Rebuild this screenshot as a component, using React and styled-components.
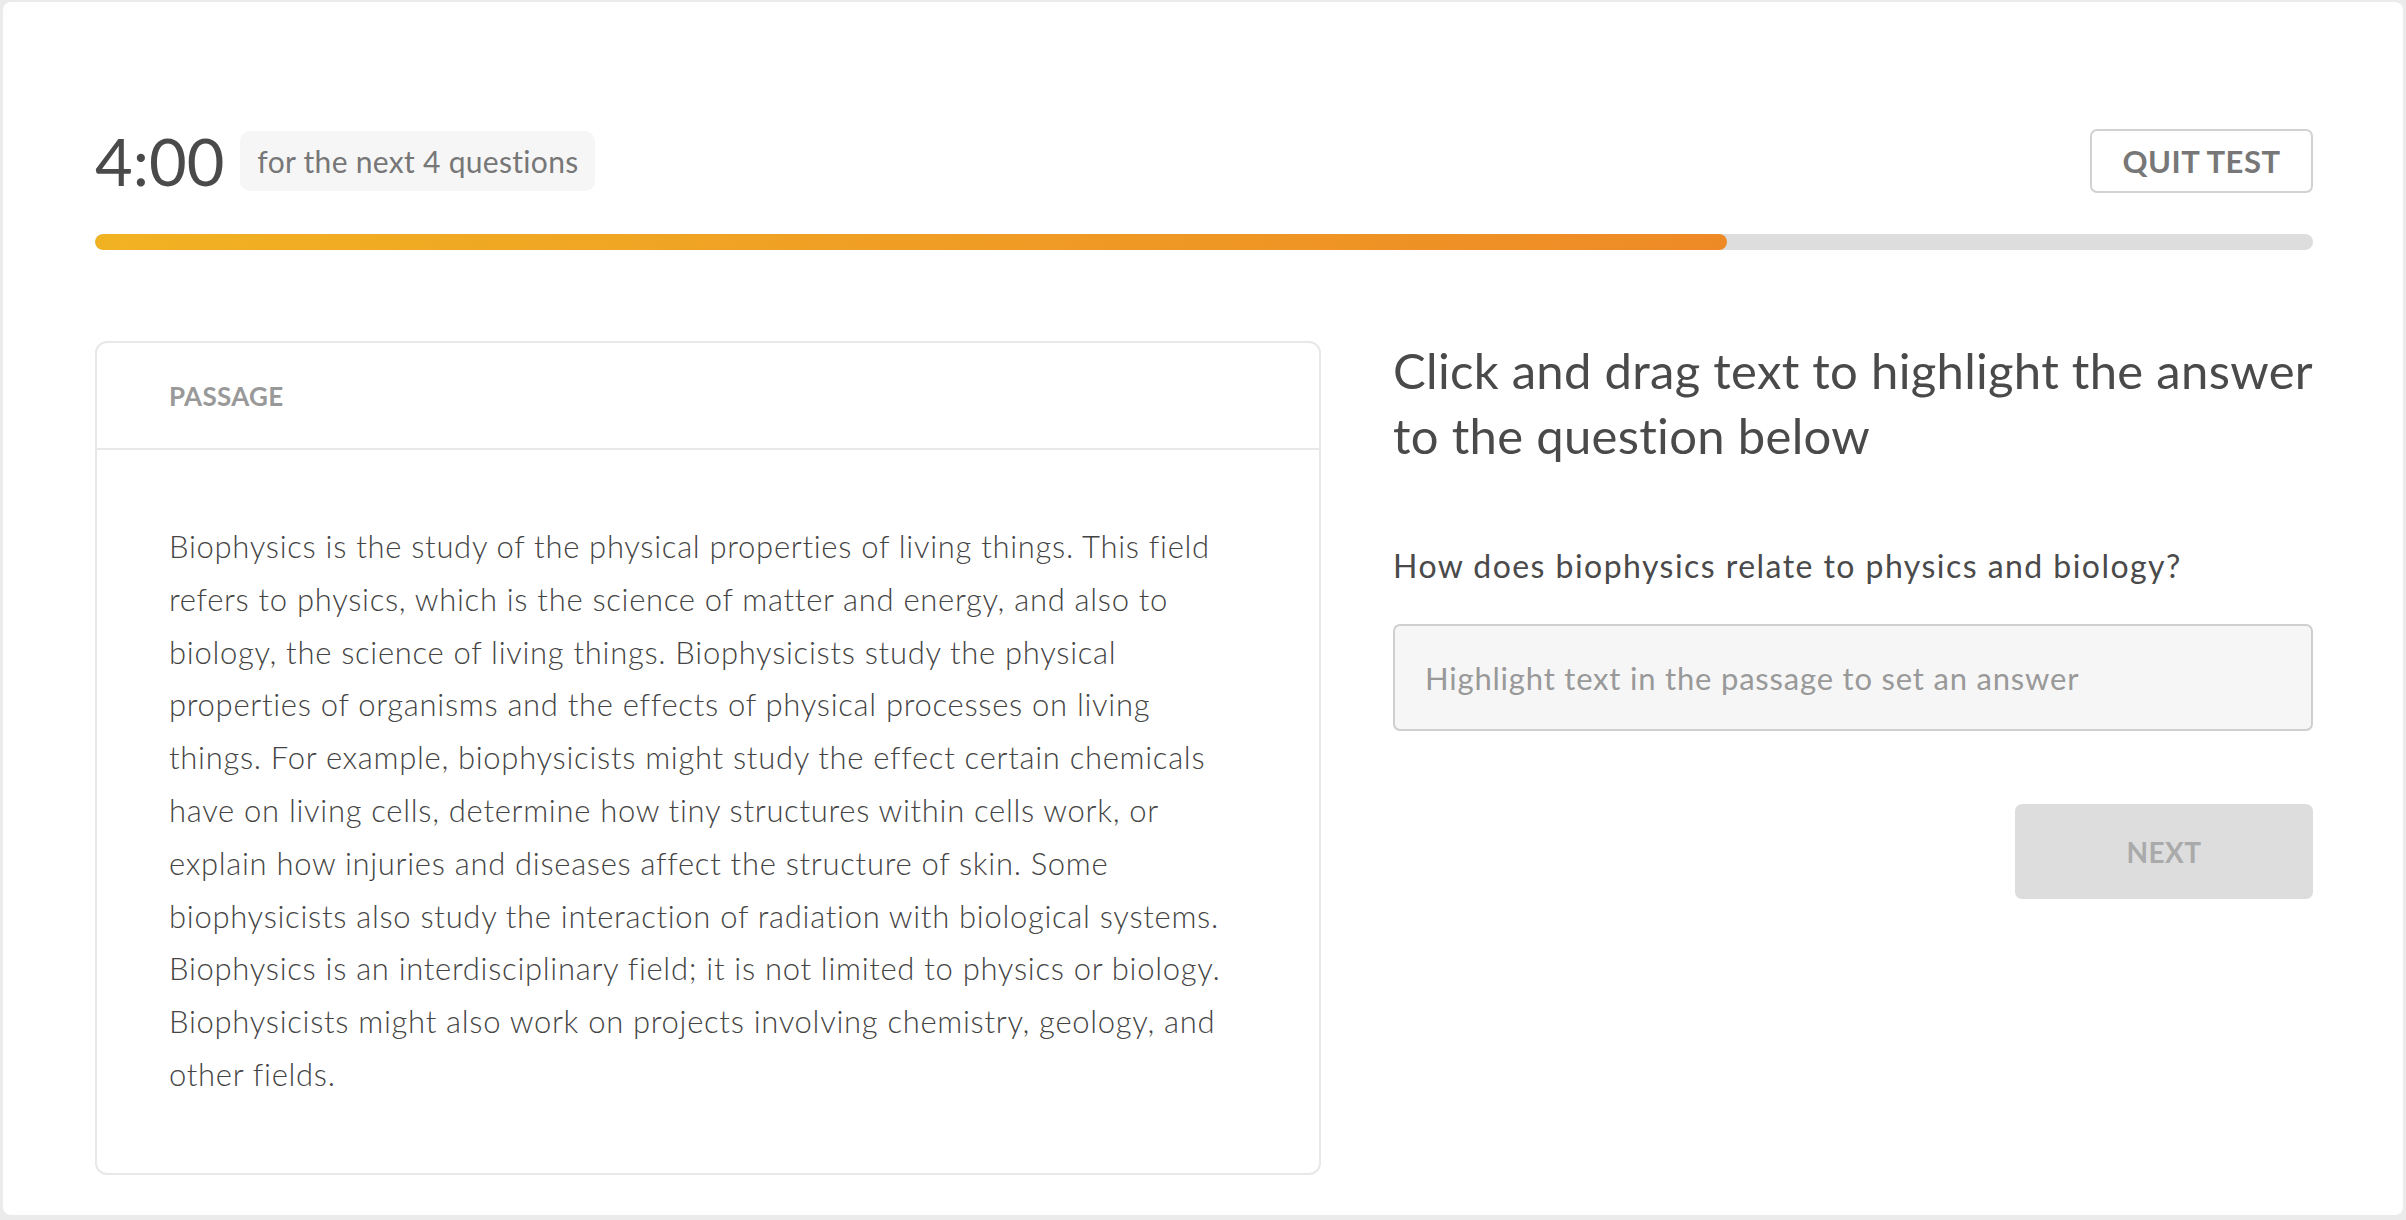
import React from "react";
import styled, { createGlobalStyle } from "styled-components";

const GlobalStyle = createGlobalStyle`
  html, body {
    margin: 0;
    padding: 0;
    background: #ebebeb;
  }
  body {
    font-family: Lato, "Open Sans", "Liberation Sans", sans-serif;
    color: #4a4a4a;
  }
  * { box-sizing: border-box; }
`;

const Page = styled.div`
  margin: 2px 3px 0 3px;
  height: 1213px;
  background: #fff;
  border-radius: 8px;
  padding: 127px 90px 0 92px;
`;

const TopRow = styled.div`
  display: flex;
  align-items: center;
  justify-content: space-between;
  height: 64px;
`;

const TimerGroup = styled.div`
  display: flex;
  align-items: center;
  gap: 16px;
`;

const Timer = styled.span`
  font-size: 65px;
  font-weight: 400;
  color: #4a4a4a;
  line-height: 1;
`;

const Pill = styled.span`
  display: inline-flex;
  align-items: center;
  height: 60px;
  padding: 0 17px;
  background: #f6f6f6;
  border-radius: 10px;
  font-size: 30px;
  letter-spacing: 0.3px;
  color: #777;
`;

const QuitButton = styled.button`
  height: 64px;
  width: 223px;
  border: 2px solid #d2d2d2;
  border-radius: 7px;
  background: #fff;
  color: #777;
  font-family: inherit;
  font-size: 31px;
  font-weight: 700;
  letter-spacing: 0.5px;
  cursor: pointer;
`;

const Track = styled.div`
  margin-top: 41px;
  height: 16px;
  border-radius: 8px;
  background: #dddddd;
  overflow: hidden;
`;

const Fill = styled.div`
  height: 100%;
  border-radius: 8px;
  background: linear-gradient(90deg, #f1b222 0%, #ee8a26 100%);
`;

const Content = styled.div`
  margin-top: 91px;
  display: grid;
  grid-template-columns: 1226px 1fr;
  gap: 72px;
  align-items: start;
`;

const PassageCard = styled.section`
  border: 2px solid #e8e8e8;
  border-radius: 12px;
  height: 834px;
`;

const PassageHeader = styled.div`
  height: 107px;
  display: flex;
  align-items: center;
  padding: 0 72px;
  border-bottom: 2px solid #e8e8e8;
  font-size: 26px;
  font-weight: 700;
  color: #999;
  letter-spacing: 0.3px;
`;

const PassageBody = styled.p`
  margin: 0;
  padding: 70px 70px 0 72px;
  font-size: 31px;
  font-weight: 300;
  letter-spacing: 0.7px;
  line-height: 52.8px;
  color: #444;
`;

const Side = styled.div`
  display: flex;
  flex-direction: column;
`;

const Heading = styled.h1`
  margin: -3px 0 0 0;
  font-size: 49px;
  font-weight: 400;
  letter-spacing: 0.3px;
  line-height: 65px;
  color: #4a4a4a;
`;

const Question = styled.p`
  margin: 78px 0 0 0;
  font-size: 32px;
  font-weight: 400;
  letter-spacing: 1.45px;
  line-height: 40px;
  color: #4a4a4a;
`;

const AnswerBox = styled.div`
  margin-top: 38px;
  height: 107px;
  display: flex;
  align-items: center;
  padding: 0 30px;
  background: #f6f6f6;
  border: 2px solid #cfcfcf;
  border-radius: 7px;
  font-size: 31px;
  letter-spacing: 0.8px;
  color: #999;
`;

const NextButton = styled.button`
  align-self: flex-end;
  margin-top: 73px;
  width: 298px;
  height: 95px;
  border: none;
  border-radius: 7px;
  background: #dddddd;
  color: #aaa;
  font-family: inherit;
  font-size: 28px;
  font-weight: 700;
  letter-spacing: 0.5px;
`;

const passage =
  "Biophysics is the study of the physical properties of living things. This field refers to physics, which is the science of matter and energy, and also to biology, the science of living things. Biophysicists study the physical properties of organisms and the effects of physical processes on living things. For example, biophysicists might study the effect certain chemicals have on living cells, determine how tiny structures within cells work, or explain how injuries and diseases affect the structure of skin. Some biophysicists also study the interaction of radiation with biological systems. Biophysics is an interdisciplinary field; it is not limited to physics or biology. Biophysicists might also work on projects involving chemistry, geology, and other fields.";

export default function App() {
  const progress = 73.6;
  return (
    <>
      <GlobalStyle />
      <Page>
        <TopRow>
          <TimerGroup>
            <Timer>4:00</Timer>
            <Pill>for the next 4 questions</Pill>
          </TimerGroup>
          <QuitButton>QUIT TEST</QuitButton>
        </TopRow>
        <Track>
          <Fill style={{ width: `${progress}%` }} />
        </Track>
        <Content>
          <PassageCard>
            <PassageHeader>PASSAGE</PassageHeader>
            <PassageBody>{passage}</PassageBody>
          </PassageCard>
          <Side>
            <Heading>Click and drag text to highlight the answer to the question below</Heading>
            <Question>How does biophysics relate to physics and biology?</Question>
            <AnswerBox>Highlight text in the passage to set an answer</AnswerBox>
            <NextButton disabled>NEXT</NextButton>
          </Side>
        </Content>
      </Page>
    </>
  );
}
